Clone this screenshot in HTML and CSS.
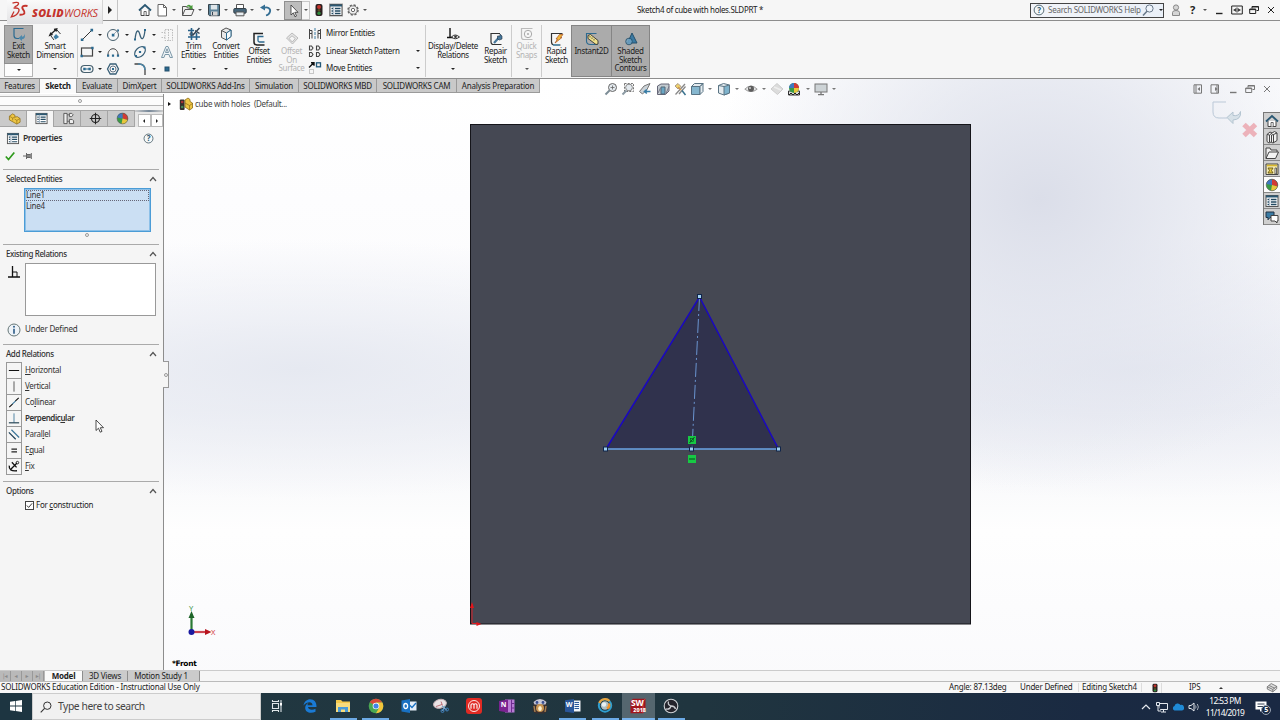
FILE: index.html
```
<!DOCTYPE html>
<html lang="en">
<head>
    <meta charset="UTF-8">
    <meta name="viewport" content="width=device-width, initial-scale=1.0">
    <title>Sketch4 of cube with holes.SLDPRT *</title>
    <link rel="stylesheet" href="styles.css">
</head>
<body>

    <!-- Shared icons -->
    <svg class="defs">
        <symbol id="i-home" viewBox="0 0 14 14"><path d="M3 7v5.500h8V7" fill="#fff" stroke="#444"/><path d="M1 7.500 7 2l6 5.500" fill="none" stroke="#2b5873" stroke-width="1.800"/><path d="M6 12.500V8.500h2.200v4" fill="#fff" stroke="#444" stroke-width=".8"/></symbol>
        <symbol id="i-light" viewBox="0 0 14 14"><rect x="3.500" y="1" width="7" height="12" rx="2" fill="#2a2020"/><circle cx="7" cy="4" r="2" fill="#c3342c"/><circle cx="7" cy="7.300" r="1.300" fill="#5c4a20"/><circle cx="7" cy="10.300" r="1.700" fill="#2f8a3c"/></symbol>
        <symbol id="i-props" viewBox="0 0 14 14"><rect x="1" y="1.500" width="12" height="11" fill="#fff" stroke="#555"/><path d="M1 2.500h12" stroke="#2b5873" stroke-width="2"/><path d="M4.800 3v9" stroke="#9ab" /><path d="M2.500 5.500h1.500M2.500 8h1.500M2.500 10.500h1.500M6 5.500h5.500M6 8h5.500M6 10.500h5.500" stroke="#234a62" stroke-width="1.300"/></symbol>
        <symbol id="i-ball" viewBox="0 0 14 14"><circle cx="7" cy="7" r="5.800" fill="#3a9a45"/><path d="M7 7V1.200A5.800 5.800 0 0 1 12.500 8.500z" fill="#d33a35"/><path d="M7 7 1.300 6A5.800 5.800 0 0 1 7 1.200z" fill="#3f78c0"/><path d="M7 7l5.500 1.500A5.800 5.800 0 0 1 6 12.700z" fill="#e8c63c"/><circle cx="7" cy="7" r="5.800" fill="none" stroke="#555" stroke-width=".6"/></symbol>
        <symbol id="i-part" viewBox="0 0 14 14"><path d="M1.500 4.500 5 2l2.500 1.500v2L10 5l3 2v4l-3.500 2L1.500 8.500z" fill="#eec644" stroke="#8d6c16" stroke-width=".8"/><path d="M1.500 4.500 5 6.500 7.500 5.500M5 6.500V9M9.500 13V9l3.500-2M9.500 9 7 7.500" fill="none" stroke="#8d6c16" stroke-width=".7"/></symbol>
        <symbol id="i-up" viewBox="0 0 8 6"><path d="M1 5 4 1.500 7 5" fill="none" stroke="#555" stroke-width="1.200"/></symbol>
        <symbol id="i-min" viewBox="0 0 10 10"><path d="M2 8.500h6.500" stroke="currentColor" stroke-width="1.400"/></symbol>
        <symbol id="i-restore" viewBox="0 0 10 10"><path d="M3 3.500V1.500h6.500v4H7.500M.7 4h6v4.500h-6zM.7 4.600h6M3 2h6.500" fill="none" stroke="currentColor"/></symbol>
        <symbol id="i-close" viewBox="0 0 10 10"><path d="M2 2l6 6M8 2 2 8" stroke="currentColor"/></symbol>
        <symbol id="i-help" viewBox="0 0 14 14"><circle cx="7" cy="7" r="5.700" fill="#f4f8fa" stroke="#3f5560"/></symbol>
    </svg>

    <!-- Title bar -->
    <header class="titlebar">
        <div class="logo">
            <svg class="ds" viewBox="0 0 18 18"><path d="M2 2.200C5 .9 8.500 1 8 3 7.600 4.500 5.500 5.300 4 5.800M3 7.200C7 6.500 9.500 7.500 8.200 10.500 7 13.500 4 15.300.8 15.800L3.500 10.500" fill="none" stroke="#c4332c" stroke-width="1.300"/><path d="M17 5C13 4 10.500 5.800 12.500 8.300 15 11.300 15 14 9 13.800" fill="none" stroke="#c4332c" stroke-width="1.900"/></svg>
            <span class="brand"><b>SOLID</b>WORKS</span>
        </div>
        <span class="play"></span>
        <nav class="quick">
            <svg class="ic first"><use href="#i-home"/></svg>
            <svg class="ic" viewBox="0 0 14 14"><path d="M3 1.500h5.500L11.500 4.500v8.500H3z" fill="#fff" stroke="#666"/><path d="M8.500 1.500v3h3" fill="none" stroke="#666"/></svg><i class="caret"></i>
            <svg class="ic" viewBox="0 0 14 14"><path d="M1.500 12.500v-9h4l1 1.500H11v2" fill="#eee" stroke="#555"/><path d="M1.500 12.500 4 6.500h9l-2.500 6z" fill="#f4f4f4" stroke="#555"/><path d="M5 4.500C6 1.500 8.500 1 10 3L11.500 2v4H7.800L9 4.500C8 3 6.500 3.500 5 4.500z" fill="#4a9a3c"/></svg><i class="caret"></i>
            <svg class="ic" viewBox="0 0 14 14"><path d="M1.500 1.500h11v11.200h-10l-1-1z" fill="#5b8298" stroke="#34424a"/><rect x="3.800" y="1.800" width="6.400" height="4.700" fill="#dfe6ea"/><rect x="4" y="8.500" width="6.500" height="4" fill="#d5d5d5"/><path d="M5.500 9v3" stroke="#345"/></svg><i class="caret"></i>
            <svg class="ic" viewBox="0 0 14 14"><path d="M3.500 5.500V1.500h7v4" fill="#fff" stroke="#555"/><rect x=".8" y="5.500" width="12.400" height="4.700" rx="1" fill="#47667a" stroke="#34424a"/><path d="M3 9h8v3.800H3z" fill="#e8eef2" stroke="#555"/></svg><i class="caret"></i>
            <svg class="ic" viewBox="0 0 14 14"><path d="M4 5.200C8.500 3 12 5.500 11 8.800 10.500 10.800 9 12 7 12.500" fill="none" stroke="#356f94" stroke-width="1.800"/><path d="M1 4.500 6 1.500v6z" fill="#356f94"/></svg><i class="caret"></i>
            <span class="pick"><svg viewBox="0 0 14 14"><path d="M5 1v10l2.300-2.200L9 12.800l1.500-.8L8.800 8.300H12z" fill="#fff" stroke="#333" stroke-width=".8"/></svg></span>
            <span class="pickdrop"><i class="caret"></i></span>
            <svg class="ic light"><use href="#i-light"/></svg>
            <svg class="ic framed"><use href="#i-props"/></svg>
            <svg class="ic gear" viewBox="0 0 14 14"><circle cx="7" cy="7" r="5" fill="#eee" stroke="#666" stroke-width="1.500" stroke-dasharray="2.200 1.720"/><circle cx="7" cy="7" r="4.100" fill="#f2f2f2" stroke="#666" stroke-width=".8"/><circle cx="7" cy="7" r="1.700" fill="#fff" stroke="#666"/></svg><i class="caret"></i>
        </nav>
        <div class="doc-title">Sketch4 of cube with holes.SLDPRT *</div>
        <div class="search">
            <span class="q"><svg><use href="#i-help"/></svg><b>?</b></span>
            <span class="ph">Search SOLIDWORKS Help</span>
            <svg class="mag" viewBox="0 0 12 12"><circle cx="7.500" cy="4.500" r="3.600" fill="#eef4fb" stroke="#68788a"/><path d="M5 7.200 1 11.500" stroke="#68788a" stroke-width="1.500"/></svg>
            <i class="caret dark"></i>
        </div>
        <div class="winbtns">
            <svg class="person" viewBox="0 0 10 14"><circle cx="5" cy="4.500" r="2.600" fill="#d5d5d5" stroke="#888"/><path d="M1.500 12.500V9.500Q1.500 7.500 5 7.500t3.500 2v3z" fill="#d5d5d5" stroke="#888"/></svg>
            <b class="qm">?</b>
            <i class="caret"></i>
            <svg class="w1"><use href="#i-min"/></svg>
            <svg class="w2" viewBox="0 0 12 10"><path d="M.7 1h10.600v8H.7zM6 2.500v5M2.500 5h2M7.500 5h2" fill="none" stroke="#222"/><path d="M4.800 3 3 5l1.800 2zM7.200 3 9 5 7.200 7z" fill="#222"/></svg>
            <svg class="w3"><use href="#i-restore"/></svg>
            <svg class="w4"><use href="#i-close"/></svg>
        </div>
    </header>

    <!-- Ribbon -->
    <section class="ribbon">
        <div class="btn exit">
            <div class="face">
                <svg class="ic" viewBox="0 0 14 14"><path d="M11.500 1.500H2v7q0 3 3 3h2" fill="none" stroke="#2c6a90" stroke-width="1.200"/><path d="M6.500 11 10 8v1.800q2.500 0 2.500-3.300 1.500 5.500-2.500 5.700V14z" fill="#4d88ab"/></svg>
                <span>Exit<br>Sketch</span>
            </div>
            <i class="caret dark"></i>
        </div>
        <div class="btn smart">
            <svg class="ic" viewBox="0 0 14 14"><path d="M2 8 8 2.500M3 5.500l-1.300 3 3-1M6 2.500l2.800-.7-.8 2.700" fill="none" stroke="#222" stroke-width="1.300"/><path d="M3 9l3 4M9 3l3.500 4" stroke="#333" fill="none"/><path d="M8 7 11 10l-3.500 2.500L5.500 10z" fill="#3f7ea4"/></svg>
            <span>Smart<br>Dimension</span>
            <i class="caret dark"></i>
        </div>
        <div class="tools">
            <svg class="ic" viewBox="0 0 14 14"><path d="M2 12 12 2" stroke="#333"/><path d="M.8 10.500h2.600v2.600H.8zM10.500.8h2.600v2.600h-2.600z" fill="#2c6a90"/></svg><i class="caret dark"></i>
            <svg class="ic" viewBox="0 0 14 14"><circle cx="7" cy="7" r="5.500" fill="none" stroke="#47606e"/><path d="M5.800 5.800h2.600v2.600H5.800zM11 1.500h2v2h-2z" fill="#2c6a90"/><path d="M8 6l4-4" stroke="#789" stroke-width=".7"/></svg><i class="caret dark"></i>
            <svg class="ic" viewBox="0 0 14 14"><path d="M2 12C3 1 5.500 1 7 7s4 5 5-5" fill="none" stroke="#3a6078" stroke-width="1.300"/><path d="M1 10.500h2v2H1zM11 1h2v2h-2z" fill="#2c6a90"/></svg><i class="caret dark"></i>
            <svg class="ic faded" viewBox="0 0 14 14"><path d="M5 1.500h7.500v11H5zM1.500 4.500H5M1.500 9.500H5M8.500 1.500v11" fill="none" stroke="#999" stroke-dasharray="1.500 1"/></svg>

            <svg class="ic" viewBox="0 0 14 14"><rect x="1.500" y="3" width="11" height="8" fill="none" stroke="#444" stroke-width="1.200"/><path d="M.5 9.800h2.400v2.400H.5zM11.200 1.800h2.400v2.400h-2.400z" fill="#2c6a90"/></svg><i class="caret dark"></i>
            <svg class="ic" viewBox="0 0 14 14"><path d="M2 10.500C1.500 1.500 12.500 1.500 12 10.500" fill="none" stroke="#444"/><path d="M1 9.500h2.200v2.200H1zM10.900 9.500h2.200v2.200h-2.200zM5.900 9.500h2.200v2.200H5.900z" fill="#2c6a90"/></svg><i class="caret dark"></i>
            <svg class="ic" viewBox="0 0 14 14"><ellipse cx="7" cy="7" rx="6.300" ry="4.200" transform="rotate(-45 7 7)" fill="none" stroke="#3a6078" stroke-width="1.200"/><path d="M5.900 5.900h2.200v2.200H5.900zM10.500 1.500h2v2h-2zM2 10h2v2H2z" fill="#2c6a90"/></svg><i class="caret dark"></i>
            <svg class="ic" viewBox="0 0 14 14"><path d="M1.500 12.500 6 1.500h2l4.500 11H10l-1-3H5l-1 3zM5.500 7.500h3L7 3.800z" fill="#f0f5f8" stroke="#7c98a8"/></svg>

            <svg class="ic" viewBox="0 0 14 14"><rect x="1" y="3.500" width="12" height="7" rx="3.500" fill="none" stroke="#47606e" stroke-width="1.200"/><path d="M3.200 5.800h2.400v2.400H3.200zM8.400 5.800h2.400v2.400H8.400z" fill="#2c6a90"/><path d="M4 7h6" stroke="#2c6a90"/></svg><i class="caret dark"></i>
            <svg class="ic" viewBox="0 0 14 14"><path d="M1.500 7 4.200 2h5.600l2.700 5-2.700 5H4.200z" fill="none" stroke="#3a6078" stroke-width="1.300"/><circle cx="7" cy="7" r="3" fill="none" stroke="#678"/><path d="M6 6h2v2H6z" fill="#2c6a90"/></svg><i></i>
            <svg class="ic" viewBox="0 0 14 14"><path d="M1.500 2H6q6 0 6 6v5" fill="none" stroke="#444" stroke-width="1.300"/><path d="M5 2q7 0 7 6" fill="none" stroke="#4a86a8" stroke-width="1.500"/></svg><i class="caret dark"></i>
            <svg class="ic" viewBox="0 0 14 14"><rect x="5" y="5" width="4" height="4" fill="#2c6a90" stroke="#24506c"/></svg>
        </div>
        <div class="btn trim">
            <svg class="ic" viewBox="0 0 14 14"><path d="M1 3.500h6M4.500 1v12M1 10h12M9.500 6v7" stroke="#27618a" stroke-width="1.600"/><path d="M12.500 1 5.500 8.500M8 3.500l4.500 3" stroke="#345" stroke-width="1.500"/><circle cx="4.500" cy="7" r="1.500" fill="none" stroke="#345"/></svg>
            <span><u>T</u>rim<br>Entities</span>
            <i class="caret dark"></i>
        </div>
        <div class="btn convert">
            <svg class="ic" viewBox="0 0 14 14"><path d="M2.500 3.500 7 1l5 2v6.500L7.500 13l-5-2.500z" fill="#e9e9e9" stroke="#555"/><path d="M2.500 3.500 7.500 6v7M7.500 6 12 3" fill="none" stroke="#555"/><path d="M7.500 6 12 3v6.500L7.500 13z" fill="#f7f9fa" stroke="#2c6a90"/></svg>
            <span>Convert<br>Entities</span>
            <i class="caret dark"></i>
        </div>
        <div class="btn low offset">
            <svg class="ic" viewBox="0 0 14 14"><path d="M11 1.500H2V10q0 3 3 3h7.500" fill="none" stroke="#222" stroke-width="1.500"/><path d="M11.500 4.500H6v4q0 1.500 1.500 1.500h5" fill="none" stroke="#2c6a90" stroke-width="1.300"/></svg>
            <span>Offset<br>Entities</span>
        </div>
        <div class="btn low surface off">
            <svg class="ic" viewBox="0 0 14 14"><path d="M1.500 6 7 1l6 5-5.500 6z" fill="#e4e4e4" stroke="#bbb"/><path d="M4 6.500 7 3.800l3.300 2.700L7.300 10z" fill="#f5f5f5" stroke="#bbb"/></svg>
            <span>Offset<br>On<br>Surface</span>
        </div>
        <ul class="stack">
            <li><svg class="ic" viewBox="0 0 14 14"><path d="M1.500 2v10M1.500 3.500h2.500v3H1.500M4 6.500v5M12.500 2v10M12.500 3.500H10v3h2.500M10 6.500v5" fill="none" stroke="#444"/><path d="M7 1v12" stroke="#3d7da3" stroke-dasharray="3 1"/></svg><span>Mirror Entities</span></li>
            <li><svg class="ic" viewBox="0 0 14 14"><path d="M1.500 2h2l1.500 2-1.500 2h-2zM8.500 2h2L12 4l-1.500 2h-2zM1.500 8.500h2l1.500 2-1.500 2h-2zM8.500 8.500h2l1.500 2-1.500 2h-2z" fill="none" stroke="#444" stroke-width="1.100"/></svg><span>Linear Sketch Pattern</span><i class="caret dark"></i></li>
            <li><svg class="ic" viewBox="0 0 14 14"><path d="M1 6.500 5.500 2M3 1.800h3v3" fill="none" stroke="#111" stroke-width="1.400"/><rect x="8.500" y="1.800" width="4" height="4" fill="#eee" stroke="#245a7a" stroke-width="1.300"/><path d="M1.500 8.500h4v4h-4z" fill="none" stroke="#999" stroke-dasharray="1 1"/></svg><span>Move Entities</span><i class="caret dark"></i></li>
        </ul>
        <div class="btn display">
            <svg class="ic" viewBox="0 0 14 14"><path d="M4 1v9M1 10.500h6" stroke="#111" stroke-width="1.400"/><path d="M5.500 10q3.500-4 8 0-4.500 3.500-8 0z" fill="#eee" stroke="#333"/><circle cx="9.500" cy="9.800" r="1.300" fill="#333"/></svg>
            <span>Display/Delete<br>Relations</span>
            <i class="caret dark"></i>
        </div>
        <div class="btn low repair">
            <svg class="ic" viewBox="0 0 14 14"><path d="M11 1.500H2V10q0 2.500 2.500 2.500h8" fill="none" stroke="#333" stroke-width="1.200"/><path d="M5 11 9.500 6" stroke="#47779a" stroke-width="2.200"/><path d="M8.500 4l2.500 0 0-2 2 2v3L10.500 8 8.500 7z" fill="#47779a" stroke="#234" stroke-width=".6"/></svg>
            <span>Repair<br>Sketch</span>
        </div>
        <div class="btn snaps off">
            <svg class="ic" viewBox="0 0 14 14"><path d="M12.500 1.500h-11V10q0 2.500 2.500 2.500h8.500" fill="none" stroke="#bbb" stroke-width="1.200"/><circle cx="8" cy="7" r="3.700" fill="none" stroke="#aaa"/><circle cx="8" cy="7" r="1" fill="#aaa"/></svg>
            <span>Quick<br>Snaps</span>
            <i class="caret"></i>
        </div>
        <div class="btn low rapid">
            <svg class="ic" viewBox="0 0 14 14"><path d="M12.500 1.500h-11V10q0 3 3 3h6" fill="none" stroke="#333" stroke-width="1.200"/><path d="M3 13h7" stroke="#4b8cb0" stroke-width="1.500"/><path d="M9.500 2.500h3.500L10.500 5.500H12L5 11l2.500-4H6z" fill="#f0b63a" stroke="#a8501c" stroke-width=".7"/></svg>
            <span>Rapid<br>Sketch</span>
        </div>
        <div class="btn low on instant">
            <svg class="ic" viewBox="0 0 14 14"><path d="M11.500 1.500h-10V9q0 3.500 4 3.500h7" fill="none" stroke="#2c6a90" stroke-width="1.100"/><path d="M3 3.500l2.500-1 7.500 6v3.500l-2 .5L3 6.500z" fill="#efe08a" stroke="#333" stroke-width=".9"/><path d="M5 5.500V4M7 7V5.500M9 8.500V7" stroke="#333" stroke-width=".7"/></svg>
            <span>Instant2D</span>
        </div>
        <div class="btn low on shaded">
            <svg class="ic" viewBox="0 0 14 14"><path d="M8 1 13 11H3.500z" fill="#3b7aa3" stroke="#24506c"/><circle cx="5" cy="9.500" r="3.300" fill="#6fa3c4" stroke="#24506c" opacity=".85"/></svg>
            <span>Shaded<br>Sketch<br>Contours</span>
        </div>
    </section>

    <main class="workspace">
        <div class="tabrow">
            <div class="tabs">
                <span class="t1">Features</span><span class="t2 active">Sketch</span><span class="t3">Evaluate</span><span class="t4">DimXpert</span><span class="t5">SOLIDWORKS Add-Ins</span><span class="t6">Simulation</span><span class="t7">SOLIDWORKS MBD</span><span class="t8">SOLIDWORKS CAM</span><span class="t9">Analysis Preparation</span>
            </div>
            <!-- Heads-up view toolbar -->
            <div class="headsup">
                <svg viewBox="0 0 14 14"><circle cx="8.500" cy="5.500" r="4" fill="#e3e9ee" stroke="#666"/><path d="M8.500 3.500v4M6.500 5.500h4" stroke="#666" stroke-width=".8"/><path d="M5.500 8.500 1.500 12.500" stroke="#7c8c96" stroke-width="2"/></svg>
                <svg viewBox="0 0 14 14"><path d="M3.500 1.500h9v8h-9z" fill="none" stroke="#777" stroke-dasharray="2 1.200"/><circle cx="8" cy="5.500" r="3.400" fill="#e3e9ee" stroke="#888"/><path d="M5.500 8.500 1.500 12.500" stroke="#8b9aa3" stroke-width="2"/></svg>
                <svg viewBox="0 0 14 14"><path d="M12 1.500 6 4 1.500 9.500l3 2.500L9 7.500z" fill="#ccd3d8" stroke="#777"/><path d="M12.500 9.500H7M8.800 7.500 6.500 9.500l2.300 2" fill="none" stroke="#397da6" stroke-width="1.600"/></svg>
                <svg viewBox="0 0 14 14"><path d="M1.500 4 5 2h8v7l-3.500 3.500h-8z" fill="#c3cbd0" stroke="#667"/><path d="M5 5h4v7H5z" fill="#69a6c4" stroke="#567"/><path d="M2 11 4.500 6M10 11.500l3-7" stroke="#778"/></svg>
                <svg viewBox="0 0 14 14"><path d="M2 4l3-2.500 3 3L5 7z" fill="#efd36c" stroke="#a98"/><path d="M12 2 2.500 12.500M12.500 4.500 6 12" stroke="#888" stroke-width="1.300"/><path d="M9 8.500 12.500 13" stroke="#39728f" stroke-width="1.500"/><path d="M5 5l3 3" stroke="#d39b4b" stroke-width="1.500"/></svg>
                <svg viewBox="0 0 14 14"><path d="M1.500 4.500h8.500v8H1.500z" fill="#86b7cf" stroke="#5a7484"/><path d="M1.500 4.500 4.500 1.500h8.500l-3 3zM10 12.500l3-3v-8l-3 3z" fill="#e4ebef" stroke="#5a7484"/></svg><i class="caret"></i>
                <svg viewBox="0 0 14 14"><path d="M1.500 3.500 6.500 1.500l6 1.500v8L7 13l-5.500-2z" fill="#e4ebef" stroke="#5a7484"/><path d="M7 4.500v8.500l5.500-2V3z" fill="#7fb3cc" stroke="#5a7484"/><path d="M1.500 3.500 7 4.500" stroke="#5a7484"/></svg><i class="caret"></i>
                <svg viewBox="0 0 14 14"><path d="M.8 7.200Q7 .8 13.200 7.200 7 12 .8 7.200z" fill="#e6e6e6" stroke="#999"/><circle cx="7" cy="6.800" r="3" fill="#5c5c5c"/><circle cx="6" cy="6" r="1" fill="#ccc"/></svg><i class="caret"></i>
                <svg viewBox="0 0 14 14"><path d="M1 7 7 1.500 13 7 7.500 12.500z" fill="#dcdcdc" stroke="#ccc"/><path d="M4 5l7 3" stroke="#eee" stroke-width="1.500"/></svg>
                <svg viewBox="0 0 14 14"><path d="M1.500 9h11v4h-11z" fill="#ddd" stroke="#333"/><path d="M2 13l2-2 2 2 2-2 2 2 2-2" stroke="#222" fill="none"/><circle cx="7" cy="6" r="5" fill="#3a9a45"/><path d="M7 6V1a5 5 0 0 1 5 5z" fill="#d33a35"/><path d="M7 6H2a5 5 0 0 1 5-5z" fill="#3f78c0"/><path d="M7 6h5a5 5 0 0 1-5 5z" fill="#e8c63c"/></svg><i class="caret"></i>
                <svg viewBox="0 0 14 14"><rect x="1" y="2" width="12" height="8" fill="#cdd3d6" stroke="#777"/><path d="M7 10v2.500M4 12.700h6" stroke="#777" stroke-width="1.300"/></svg><i class="caret"></i>
            </div>
            <div class="docbtns">
                <svg viewBox="0 0 10 10"><path d="M1 .8h7.500v8.400H1zM3 .8v8.400" fill="none" stroke="currentColor"/><path d="M7 3v4L4.500 5z" fill="currentColor"/></svg>
                <svg viewBox="0 0 10 10"><path d="M1 .8h7.500v8.400H1zM7 .8v8.400" fill="none" stroke="currentColor"/><path d="M5 3v4l2.500-2z" fill="currentColor"/></svg>
                <svg><use href="#i-min"/></svg>
                <svg><use href="#i-restore"/></svg>
                <svg><use href="#i-close"/></svg>
            </div>
        </div>

        <div class="body">
            <!-- Property manager -->
            <aside class="panel">
                <div class="grip"><i class="dot"></i></div>
                <div class="mgr-tabs">
                    <span><svg><use href="#i-part"/></svg></span>
                    <span class="active"><svg><use href="#i-props"/></svg></span>
                    <span><svg viewBox="0 0 14 14"><path d="M5.500 3H8M3.500 6v6M5.500 10H8" stroke="#666"/><path d="M2 1.500h3.500v11H2zM8 1.500h2.500l1.500 1.500-1.500 2H8zM8 8h3l1.500 1.500v3H8z" fill="#eee" stroke="#555"/></svg></span>
                    <span><svg viewBox="0 0 14 14"><circle cx="7" cy="7" r="4.300" fill="none" stroke="#222" stroke-width="1.200"/><path d="M7 .8v12.400M.8 7h12.400" stroke="#222" stroke-width="1.200"/></svg></span>
                    <span><svg><use href="#i-ball"/></svg></span>
                    <div class="more"><b class="prev"></b><b class="next"></b></div>
                </div>
                <div class="prop-head">
                    <svg><use href="#i-props"/></svg>
                    <h1>Properties</h1>
                    <span class="q"><svg><use href="#i-help"/></svg><b>?</b></span>
                </div>
                <div class="prop-actions">
                    <svg viewBox="0 0 10 10"><path d="M.8 5.500 3.500 8.500 9.300 1.500" fill="none" stroke="#2f9a1c" stroke-width="1.700"/></svg>
                    <svg viewBox="0 0 10 10"><path d="M0 5h4M3.500 2v6M4 3.500h3.500v3H4M8.300 2v6" fill="none" stroke="#666"/><path d="M4 4h4v2H4z" fill="#888"/></svg>
                </div>
                <section class="group selected">
                    <h2>Selected Entities<svg><use href="#i-up"/></svg></h2>
                    <div class="listbox"><span class="focus">Line1</span><span>Line4</span></div>
                    <i class="dot"></i>
                </section>
                <section class="group existing">
                    <h2>Existing Relations<svg><use href="#i-up"/></svg></h2>
                    <div class="relations">
                        <svg viewBox="0 0 12 12"><path d="M4.500 0v11M0 11h12" stroke="#111" stroke-width="1.300"/><path d="M4.500 6H9v5" fill="none" stroke="#111"/></svg>
                        <div class="empty"></div>
                    </div>
                    <div class="state"><svg viewBox="0 0 14 14"><circle cx="7" cy="7" r="6" fill="#eef3f8" stroke="#677"/><circle cx="7" cy="3.800" r="1" fill="#34628c"/><path d="M7 5.800v5" stroke="#34628c" stroke-width="1.700"/></svg>Under Defined</div>
                </section>
                <section class="group add">
                    <h2>Add Relations<svg><use href="#i-up"/></svg></h2>
                    <ul>
                        <li><svg viewBox="0 0 14 14"><path d="M1 7h12" stroke="#111" stroke-width="1.200"/></svg><span><u>H</u>orizontal</span></li>
                        <li><svg viewBox="0 0 14 14"><path d="M7 1v12" stroke="#444"/></svg><span><u>V</u>ertical</span></li>
                        <li><svg viewBox="0 0 14 14"><path d="M1.500 12.500 5.500 8.500M8.500 5.500l4-4" stroke="#111" stroke-width="1.300"/><path d="M5 9l4-4" stroke="#3a7599" stroke-width="1.200"/></svg><span>Co<u>l</u>linear</span></li>
                        <li><svg viewBox="0 0 14 14"><path d="M7 1v11" stroke="#3a7599"/><path d="M1 12h12" stroke="#33505f" stroke-width="1.500"/></svg><span class="bold">Perpendic<u>u</u>lar</span></li>
                        <li><svg viewBox="0 0 14 14"><path d="M1 4.500 9 12.500" stroke="#1d4057" stroke-width="1.400"/><path d="M4 1.500l9 9" stroke="#3a7599" stroke-width="1.400"/></svg><span>Paral<u>l</u>el</span></li>
                        <li><svg viewBox="0 0 14 14"><path d="M4 5.500h6.500M4 8.500h6.500" stroke="#222" stroke-width="1.400"/></svg><span>E<u>q</u>ual</span></li>
                        <li><svg viewBox="0 0 14 14"><path d="M4.500 2 10 8M10.500 3 3 10.500" stroke="#111" stroke-width="1.500"/><path d="M1.500 6q-1 7 9 6" fill="none" stroke="#111" stroke-width="1.600"/><circle cx="11" cy="2.500" r="1.500" fill="none" stroke="#111"/></svg><span><u>F</u>ix</span></li>
                    </ul>
                </section>
                <section class="group options">
                    <h2>Options<svg><use href="#i-up"/></svg></h2>
                    <label><span class="check"><svg viewBox="0 0 8 8"><path d="M1 4l2 2.200L7 1.500" fill="none" stroke="#333" stroke-width="1.100"/></svg></span>For <u>c</u>onstruction</label>
                </section>
            </aside>

            <!-- Graphics area -->
            <div class="canvas">
                <div class="tree"><i class="expand"></i><svg viewBox="0 0 14 14"><rect x=".8" y="2.500" width="4.800" height="10.500" rx="1" fill="#33302c"/><circle cx="3.200" cy="5" r="1.300" fill="#a33"/><circle cx="3.200" cy="10" r="1.300" fill="#485"/><path d="M6 3l3-2 2 1.500v2l2.500 1.500v5L10.500 13 6 10z" fill="#eec644" stroke="#8d6c16" stroke-width=".8"/><path d="M10.500 13V8.500l3-2M10.500 8.500 6 6" fill="none" stroke="#8d6c16" stroke-width=".7"/></svg><span class="name">cube with holes</span><span class="cfg">(Default...</span></div>
                <svg class="model" viewBox="164 94 1099 576">
                    <rect x="470.500" y="124.500" width="500" height="499.500" fill="#454853" stroke="#15151a"/>
                    <path d="M472 604v19.500h6" fill="none" stroke="#d81f26"/>
                    <path d="M472 602l2 6h-4zM481.500 624l-5 2v-4z" fill="#e3151b"/>
                    <path d="M699.500 297 606 449h172.500z" fill="#30324d"/>
                    <path d="M606 449 699.500 297 778.500 449" fill="none" stroke="#1a08c0" stroke-width="1.500"/>
                    <path d="M699.500 297 692 449" stroke="#6a94d0" stroke-dasharray="14 3 2 3"/>
                    <path d="M606 449h172.500" stroke="#6aa5e6" stroke-width="1.700"/>
                    <g fill="#9fd0f0" stroke="#10254a">
                        <rect x="697.500" y="294.500" width="4" height="4"/><rect x="603.500" y="447" width="4" height="4"/><rect x="689.500" y="447" width="4" height="4"/><rect x="776.500" y="447" width="4" height="4"/>
                    </g>
                    <path d="M688 436h8v8h-8zM688 455h8v8h-8z" fill="#17c944"/>
                    <path d="M689 459h6M689.500 443l5-6" stroke="#074d1b"/><rect x="690.500" y="438.500" width="3" height="3" fill="none" stroke="#074d1b" stroke-width=".6"/>
                    <!-- origin triad -->
                    <path d="M191.500 632V617" stroke="#2a7a35" stroke-width="2.200"/><path d="M191.500 611l3 7h-6z" fill="#1d6428"/>
                    <path d="M191.500 632h15" stroke="#cc4450" stroke-width="2.200"/><path d="M211.500 632l-6.500 3v-6z" fill="#b7141e"/>
                    <circle cx="191.500" cy="632" r="3" fill="#1a1aa0"/>
                    <text class="ax y" x="189" y="610.500">Y</text><text class="ax x" x="211" y="635">X</text>
                    <!-- confirmation corner -->
                    <g opacity=".75"><path d="M1226 102h-13v10q0 6 6 6h8" fill="none" stroke="#a9bbcd"/><path d="M1227 117.500l6-5.500v3.500q6 1 7.500-4 1 8-7.500 8.500v3.500z" fill="#cfdce4" stroke="#9fb5c4"/>
                    <path d="M1244 124.500l11.500 11M1255.500 124.500 1244 135.500" stroke="#eb9da6" stroke-width="5"/></g>
                </svg>
                <span class="handle"><i class="dot"></i></span>
                <span class="view-name">*Front</span>
            </div>

            <div class="taskpane">
                <span><svg><use href="#i-home"/></svg></span>
                <span><svg viewBox="0 0 14 14"><path d="M2 4.500 5 2l2 1 2.500-1.500L12 3v7.500L8 13l-2-1-2 1-2-1.500z" fill="#f2f2f2" stroke="#444"/><path d="M4.500 5v7M6.500 5v7M8.500 4.500V13M2 4.500l2.500.5L7 3M6.500 5l2 -.5L12 3" fill="none" stroke="#444"/></svg></span>
                <span><svg viewBox="0 0 14 14"><path d="M1 12.500V2h4l1 2h6v2" fill="#eee" stroke="#444"/><path d="M1 12.500 4 6h9.500l-3 6.500z" fill="#f4f4f4" stroke="#444"/></svg></span>
                <span><svg viewBox="0 0 14 14"><path d="M1 2h12v10.500H1z" fill="#f3e9b0" stroke="#444"/><path d="M2 3.500h10" stroke="#d9b92e" stroke-width="1.500"/><path d="M3 6h5L6.500 8.500 8 11H3l1.500-2.500z" fill="#e5c93c" stroke="#5b4c12" stroke-width=".8"/><path d="M10 6h1.500v6H10z" fill="#fff" stroke="#444" stroke-width=".8"/></svg></span>
                <span class="active"><svg><use href="#i-ball"/></svg></span>
                <span><svg><use href="#i-props"/></svg></span>
                <span><svg viewBox="0 0 14 14"><path d="M1 2h8v5.500H5l-2 2.300V7.500H1z" fill="#3a7ba3" stroke="#234"/><path d="M6 5.500h7V11h-1v2l-2-2H6z" fill="#fff" stroke="#444"/></svg></span>
            </div>
        </div>

        <!-- Model / motion tabs -->
        <div class="sheets">
            <div class="nav"><i>|◂</i><i>◂</i><i>▸</i><i>▸|</i></div>
            <span class="s1 active">Model</span><span class="s2">3D Views</span><span class="s3">Motion Study 1</span>
        </div>
    </main>

    <footer class="status">
        <span class="edition">SOLIDWORKS Education Edition - Instructional Use Only</span>
        <span class="angle">Angle: 87.13deg</span>
        <span class="defined">Under Defined</span>
        <span class="editing">Editing Sketch4</span>
        <span class="sig"><svg><use href="#i-light"/></svg></span>
        <span class="units">IPS</span>
        <i class="upcaret"></i>
        <svg class="tag" viewBox="0 0 14 14"><path d="M1 6 6 2l7 3.500v3L8 12.500 1 9z" fill="#ddd" stroke="#666"/><path d="M1 6l7 3.500L13 5.500M8 9.500v3M3.500 4.500l7 3.500" fill="none" stroke="#666"/></svg>
    </footer>

    <!-- Windows taskbar -->
    <div class="taskbar">
        <div class="start"><svg viewBox="0 0 12 12"><path d="M0 1.800 5 1v4.600H0zM5.700.9 12 0v5.600H5.700zM0 6.400h5V11l-5-.8zM5.700 6.400H12V12l-6.300-.9z" fill="#fff"/></svg></div>
        <div class="find"><svg viewBox="0 0 12 12"><circle cx="7.300" cy="4.700" r="3.700" fill="none" stroke="#333"/><path d="M4.600 7.400.7 11.300" stroke="#333" stroke-width="1.100"/></svg>Type here to search</div>
        <div class="apps">
            <span><svg viewBox="0 0 16 16"><path d="M3.500 5.500h6v5h-6zM3.500 2v1.500h6V2M3.500 14v-1.500h6V14M12 2v12" fill="none" stroke="#dde4e7" stroke-width="1.100"/><path d="M11 5h2v2.500h-2z" fill="#fff"/></svg></span>
            <span><svg viewBox="0 0 16 16"><path d="M1.500 7.500C2 3.500 5 1.200 8.200 1.200c4 0 6.500 3 6.300 7.800H6c.3 3 4.500 3.500 7.500 1.800v3C8.500 16 3.200 14.500 3.200 10c0-2.500 1.300-4 3.300-5-.8.900-1 1.500-1 2.200h5C10.500 3 5 3.300 1.500 7.500z" fill="#1a7ad4"/></svg></span>
            <span class="run"><svg viewBox="0 0 16 16"><path d="M1 2h5l1.500 1.500H15V14H1z" fill="#f4c84b"/><path d="M1 5h14v9H1z" fill="#f8dc7c"/><path d="M3 14V9h10v5h-3v-2.500H6V14z" fill="#4a9bd8"/></svg></span>
            <span class="run"><svg viewBox="0 0 16 16"><circle cx="8" cy="8" r="7.300" fill="#4aa852"/><path d="M8 8 1.700 4.300A7.300 7.300 0 0 1 14.300 4.500H8z" fill="#d94a3a"/><path d="M8 4.500h6.400A7.300 7.300 0 0 1 8 15.300l3-5.300z" fill="#f2c53b"/><circle cx="8" cy="8" r="3.300" fill="#fff"/><circle cx="8" cy="8" r="2.600" fill="#4384e6"/></svg></span>
            <span><svg viewBox="0 0 16 16"><path d="M7 3.500h8.500v9H7z" fill="#e4eef8"/><path d="M8.500 7l2.500 2.500L15 5" stroke="#1971c2" stroke-width="1.300" fill="none"/><path d="M.5 2.500 9 1v14l-8.500-1.500z" fill="#1971c2"/><ellipse cx="4.700" cy="8" rx="1.900" ry="2.500" fill="none" stroke="#fff" stroke-width="1.300"/></svg></span>
            <span><svg viewBox="0 0 16 16"><ellipse cx="7" cy="5.800" rx="6.500" ry="4.300" transform="rotate(-12 7 6)" fill="#eae4e6" stroke="#c5b0b5"/><path d="M3 8.500 9 6.500M8 3.500l1.500 4" stroke="#b0505a" stroke-width=".8"/><path d="M9 8l4.500 4M12 8l-2.500 5" stroke="#7da6c8" stroke-width="1.200"/><circle cx="9.500" cy="13" r="1.500" fill="none" stroke="#3f80bd"/><circle cx="14" cy="11.500" r="1.500" fill="none" stroke="#3f80bd"/></svg></span>
            <span><svg viewBox="0 0 16 16"><rect width="16" height="16" rx="3" fill="#e02a23"/><circle cx="8" cy="8" r="5.500" fill="none" stroke="#fff" stroke-width=".9"/><path d="M5 10.800V7q0-1.200 1.500-1.200T8 7v3.800M8 7q0-1.200 1.500-1.200T11 7v3.800" fill="none" stroke="#fff" stroke-width="1.100"/></svg></span>
            <span><svg viewBox="0 0 16 16"><path d="M6 1.500h9.500v13H6z" fill="#b77bd4"/><path d="M12.500 1.500v13M12.500 5.500h3M12.500 10h3" stroke="#6f2c91"/><path d="M0 3l9-1.500v13L0 13z" fill="#7a2391"/></svg><b>N</b></span>
            <span><svg viewBox="0 0 16 16"><path d="M2 3 8 .5l6 2.500 1.500 10-3.500 2.500H4L.5 13z" fill="#3a3030"/><path d="M1.500 4q6.500-6 13 0l-1 2.500H2.500z" fill="#c7c9d8"/><circle cx="5" cy="4.500" r="1.400" fill="#3a4e90"/><circle cx="11" cy="4.500" r="1.400" fill="#3a4e90"/><circle cx="8" cy="10" r="4" fill="#c89450"/><ellipse cx="8" cy="10.500" rx="1.800" ry="2.500" fill="#fff2cf"/><path d="M2 8l1 6M14 8l-1 6" stroke="#a88050" stroke-width="1.400"/></svg></span>
            <span class="run"><svg viewBox="0 0 16 16"><path d="M7 2.500h8.500v11H7z" fill="#f2f5fa"/><path d="M9.500 4.500H14M9.500 6.500H14M9.500 8.500H14M9.500 10.500H14" stroke="#2b579a"/><path d="M0 2.300 9 1v14L0 13.700z" fill="#2a5699"/></svg><b>W</b></span>
            <span class="run"><svg viewBox="0 0 16 16"><circle cx="8" cy="7.500" r="6.200" fill="none" stroke="#2f9fd0" stroke-width="2"/><path d="M2.300 5A6.200 6.200 0 0 1 12.500 3" fill="none" stroke="#e9a23b" stroke-width="2.200"/><circle cx="8" cy="7.500" r="4.200" fill="#aebfc4"/><path d="M10 10.500a4.200 4.200 0 0 0 2-5" stroke="#f0922a" stroke-width="2.400" fill="none"/><circle cx="7" cy="6.500" r="2.200" fill="#e9f0f2"/></svg></span>
            <span class="run cur"><svg viewBox="0 0 16 16"><path d="M.5 3 3 .8h12.500V13L13 15.200H.5z" fill="#a3161c"/><path d="M.5 3H13v12.200M13 3l2.500-2.200" fill="none" stroke="#d6585c" stroke-width=".7"/></svg><b class="sw">SW</b><em>2018</em></span>
            <span class="run"><svg viewBox="0 0 16 16"><circle cx="8" cy="8" r="6.800" fill="#24232b" stroke="#d0d2d6" stroke-width="1.100"/><path d="M8 8q-3.500-1-2.500-4.500M8 8q3.800-.2 4.500 3M8 8q-1 3.800-5 3" fill="none" stroke="#c8cacf" stroke-width="1.300"/></svg></span>
        </div>
        <div class="tray">
            <svg viewBox="0 0 12 12"><path d="M2 8l4-4 4 4" fill="none" stroke="#e4e8ee" stroke-width="1.200"/></svg>
            <svg viewBox="0 0 12 12"><path d="M3 2.500h8.500v6H3zM5 11h5M7.500 8.500V11" fill="none" stroke="#e4e8ee"/><path d="M.5 1.500h3v3h-3zM2 4.500V10h3" fill="#1b2b41" stroke="#e4e8ee"/></svg>
            <svg viewBox="0 0 12 12"><path d="M2.500 9.500a2.300 2.300 0 0 1 0-4.400A3.300 3.300 0 0 1 8.500 4 2.600 2.600 0 0 1 10 9.500z" fill="#1f8ad6"/></svg>
            <svg viewBox="0 0 12 12"><path d="M1 4.500h2L6 2v8L3 7.500H1z" fill="none" stroke="#e4e8ee"/><path d="M7.500 4.500q1.200 1.500 0 3M9.300 3q2.200 3 0 6" fill="none" stroke="#c4cad3" stroke-width=".8"/></svg>
            <div class="clock">12:53 PM<br>11/14/2019</div>
            <div class="notes"><svg viewBox="0 0 12 12"><path d="M.5.5h11v8H7L5 11V8.500H.5z" fill="#fff"/><path d="M2.500 3h7M2.500 5.500h7" stroke="#1b2b41" stroke-width=".9"/></svg><b>5</b></div>
        </div>
    </div>

    <svg class="pointer" viewBox="0 0 10 14"><path d="M1 1v10.500l2.500-2.300 1.700 4 1.800-.8-1.700-3.700h3.200z" fill="#fff" stroke="#222" stroke-width=".8"/></svg>

</body>
</html>
```
FILE: styles.css
```
* {
    box-sizing: border-box;
}
body {
    margin: 0;
    width: 1280px;
    height: 720px;
    overflow: hidden;
    display: flex;
    flex-direction: column;
    font-family: "Noto Sans", "Open Sans", sans-serif;
    font-size: 8px;
    line-height: 8.7px;
    letter-spacing: -.32px;
    color: #222;
    background: #f5f5f5;
}
svg {
    display: block;
    flex: none;
}
ul, h1, h2 {
    margin: 0;
    padding: 0;
    list-style: none;
    font-size: inherit;
}
i, em {
    font-style: normal;
}
u {
    text-underline-offset: 1px;
    text-decoration-thickness: .7px;
}
.defs {
    position: absolute;
    width: 0;
    height: 0;
}
.ic {
    width: 14px;
    height: 14px;
}
.caret {
    width: 0;
    height: 0;
    flex: none;
    border: 2px solid transparent;
    border-top-color: #555;
    border-bottom: 0;
}
.caret.dark {
    border-top-color: #222;
}
.dot {
    width: 4px;
    height: 4px;
    border: 1px solid #999;
    border-radius: 50%;
}

/* Title bar */
.titlebar {
    height: 21px;
    flex: none;
    display: flex;
    align-items: center;
    border-bottom: 1px solid #8d8d8d;
    background: #f6f6f6;
}
.logo {
    position: relative;
    width: 96px;
    height: 24px;
    margin: 0 0 -4px 7px;
    padding-left: 3px;
    display: flex;
    align-items: center;
    background: linear-gradient(#fafafa, #e2e2e4);
    border-right: 1px solid #d5d5d5;
    color: #c4332c;
}
.ds {
    width: 19px;
    height: 18px;
    margin-top: -5px;
}
.brand {
    margin: 1px 0 0 3px;
    font-family: "Open Sans", sans-serif;
    font-size: 10.8px;
    line-height: 14px;
    letter-spacing: -.15px;
    font-style: italic;
}
.brand b {
    font-weight: 800;
    letter-spacing: .25px;
}
.play {
    width: 15px;
    height: 20px;
    display: flex;
    align-items: center;
    border-right: 1px solid #c4c4c4;
}
.play::before {
    content: "";
    margin-left: 5px;
    border: 4px solid transparent;
    border-left: 4px solid #222;
    border-right: 0;
}
.quick {
    width: 252px;
    display: flex;
    align-items: center;
}
.quick .ic {
    margin: 0 3px 0 0;
}
.quick .first {
    margin: 0 3px 0 20px;
}
.quick .caret {
    margin-right: 5px;
}
.pick {
    width: 18px;
    height: 19px;
    padding: 2px 1px;
    margin-left: -1px;
    background: #bdbdbd;
    border: 1px solid #8f8f8f;
}
.pick svg {
    width: 14px;
    height: 14px;
}
.pickdrop {
    width: 8px;
    height: 19px;
    display: flex;
    align-items: center;
    padding-left: 2px;
    border: 1px solid #c8c8c8;
    border-left: 0;
}
.quick .light {
    margin-left: 2px;
}
.quick .framed {
    background: #ccc;
}
.doc-title {
    width: 660px;
    padding-left: 267px;
    white-space: nowrap;
}
.search {
    width: 134px;
    height: 15px;
    display: flex;
    align-items: center;
    border: 1px solid #444;
    background: linear-gradient(90deg, #f2f4f8, #eaf0f8);
    color: #666;
    white-space: nowrap;
}
.q {
    display: grid;
    place-items: center;
}
.q svg, .q b {
    grid-area: 1 / 1;
}
.q svg {
    width: 12px;
    height: 12px;
}
.q b {
    font-size: 8px;
    color: #2b5873;
}
.search .q {
    margin: 0 3px 0 2px;
}
.search .ph {
    width: 94px;
    letter-spacing: -.25px;
}
.mag {
    width: 12px;
    height: 12px;
    margin-right: 5px;
}
.winbtns {
    display: flex;
    align-items: center;
    color: #222;
}
.winbtns svg {
    width: 10px;
    height: 10px;
}
.winbtns .person {
    height: 14px;
    margin: 0 9px 0 7px;
}
.qm {
    width: 6px;
    margin-right: 7px;
    font-size: 11px;
}
.winbtns .w1 {
    margin: 0 7px 0 7px;
}
.winbtns .w2 {
    width: 12px;
    margin-right: 6px;
}
.winbtns .w3 {
    margin-right: 7px;
}

/* Ribbon */
.ribbon {
    height: 58px;
    flex: none;
    display: flex;
    padding: 4px 0 0 4px;
    border-bottom: 1px solid #8d8d8d;
    background: #f6f6f6;
}
.btn {
    position: relative;
    height: 52px;
    padding-top: 2px;
    display: flex;
    flex-direction: column;
    align-items: center;
    text-align: center;
    white-space: nowrap;
}
.btn > span, .face > span {
    margin-top: 1px;
}
.btn > .caret {
    margin-top: 9px;
}
.btn.low {
    padding-top: 7px;
}
.off {
    color: #b4b4b4;
}
.on {
    background: #ababab;
    border: 1px solid #858585;
}
.btn.on {
    padding-top: 6px;
}
.exit {
    width: 29px;
    padding: 0;
    background: #fdfdfd;
    border: 1px solid #b5b5b5;
}
.exit .face {
    width: 29px;
    height: 39px;
    margin: -1px;
    padding-top: 1px;
    display: flex;
    flex-direction: column;
    align-items: center;
    background: #ababab;
    border: 1px solid #8f8f8f;
}
.exit > .caret {
    margin-top: 6px;
}
.smart {
    width: 44px;
}
.tools {
    width: 101px;
    height: 52px;
    padding: 1px 0 0 2px;
    display: grid;
    grid-template-columns: 14px 12px 15px 12px 15px 12px 14px;
    grid-template-rows: 17.3px 17.3px 17.3px;
    align-items: center;
    border-left: 1px solid #ccc;
    border-right: 1px solid #ccc;
}
.tools .caret {
    margin-left: 4px;
}
.faded {
    opacity: .6;
}
.trim { width: 31px; }
.convert { width: 34px; }
.offset { width: 32px; }
.surface { width: 33px; }
.stack {
    width: 117px;
    padding-top: 0;
}
.stack li {
    height: 17.3px;
    display: flex;
    align-items: center;
}
.stack span {
    width: 90px;
    margin-left: 4px;
}
.display {
    width: 55px;
    border-left: 1px solid #ccc;
}
.repair {
    width: 31px;
}
.snaps {
    width: 31px;
    border-left: 1px solid #ccc;
    border-right: 1px solid #ccc;
}
.rapid { width: 29px; }
.instant { width: 41px; }
.shaded {
    width: 39px;
    margin-left: -1px;
}

/* Workspace */
.workspace {
    height: 603px;
    flex: none;
    display: flex;
    flex-direction: column;
    background:
        radial-gradient(ellipse 330px 290px at 1040px 120px, #dbdee9 0%, rgba(224, 227, 237, .75) 40%, rgba(240, 241, 247, 0) 100%),
        radial-gradient(ellipse 500px 130px at 1130px 290px, rgba(226, 229, 239, .8), rgba(240, 241, 247, 0)),
        radial-gradient(ellipse 520px 130px at 300px 290px, #e6e9f1, rgba(240, 241, 247, 0)),
        linear-gradient(#fff, #fbfbfd 40%, #f3f4f8 55%, #fefefe 75%, #fafafc);
}
.tabrow {
    height: 15px;
    flex: none;
    display: flex;
}
.tabs {
    width: 540px;
    display: flex;
    line-height: 13px;
    text-align: center;
    letter-spacing: -.22px;
    white-space: nowrap;
}
.tabs span {
    height: 14px;
    background: #c9c9c9;
    border: 1px solid #9a9a9a;
    border-width: 0 1px 1px 0;
}
.tabs .active, .sheets .active {
    background: #fafafa;
    font-weight: 700;
    border-bottom: 0;
}
.t1 { width: 40px; }
.t2 { width: 37px; }
.t3 { width: 41px; }
.t4 { width: 44px; }
.t5 { width: 88px; }
.t6 { width: 49px; }
.t7 { width: 78px; }
.t8 { width: 80px; }
.t9 { width: 83px; }
.headsup {
    width: 650px;
    padding: 4px 0 0 64px;
    display: flex;
    align-items: center;
}
.headsup svg {
    width: 14px;
    height: 14px;
    margin-right: 3.2px;
}
.headsup .caret {
    margin: 0 4.600px 0 1px;
    border-top-color: #777;
}
.docbtns {
    padding: 4px 0 0 3px;
    display: flex;
    gap: 7.3px;
    align-items: center;
    color: #777;
}
.docbtns svg {
    width: 10px;
    height: 10px;
}
.body {
    height: 576px;
    display: flex;
}

/* Property manager */
.panel {
    width: 164px;
    background: #f5f5f5;
    border-right: 1px solid #8d8d8d;
    color: #333;
}
.grip {
    height: 10px;
    margin: 2px 0 4px;
    padding-right: 3px;
    display: flex;
    align-items: center;
    justify-content: center;
    background: #fcfcfc;
    border: solid #b5b5b5;
    border-width: 1px 0;
}
.mgr-tabs {
    height: 17px;
    display: flex;
}
.mgr-tabs span {
    width: 27px;
    padding: 1px 0 0 8px;
    background: #cacaca;
    border: 1px solid #a5a5a5;
    border-left: 0;
}
.mgr-tabs .active {
    background: #f5f5f5;
    border-bottom: 0;
}
.mgr-tabs svg {
    width: 13px;
    height: 13px;
}
.more {
    width: 28px;
    padding: 4px 0 0 3px;
    display: flex;
    background: linear-gradient(90deg, #ccc, #789 50%, #ccc) top / 100% 2px no-repeat #e5e5e5;
}
.more b {
    flex: 1;
    display: grid;
    place-items: center;
    background: #fff;
    border: 1px solid #bbb;
}
.more b::before {
    content: "";
    border: 2px solid transparent;
}
.more .prev::before {
    border-right-color: #222;
    border-left: 0;
}
.more .next::before {
    border-left-color: #222;
    border-right: 0;
}
.prop-head {
    height: 22px;
    padding: 0 9px 0 6px;
    display: flex;
    align-items: center;
}
.prop-head > svg {
    width: 14px;
    height: 13px;
}
.prop-head h1 {
    flex: 1;
    margin-left: 3px;
    font-size: 8.6px;
    font-weight: 600;
    letter-spacing: -.45px;
}
.prop-head .q svg {
    width: 11px;
    height: 11px;
}
.prop-actions {
    height: 20px;
    padding: 2px 0 0 5px;
    display: flex;
    gap: 8px;
}
.prop-actions svg {
    width: 10px;
    height: 10px;
}
.group {
    margin: 0 4px 0 3px;
    border-top: 1px solid #aaa;
}
.group h2 {
    height: 18px;
    padding: 0 2px 0 3px;
    display: flex;
    align-items: center;
    justify-content: space-between;
    font-weight: 500;
    letter-spacing: -.38px;
}
.group h2 svg {
    width: 8px;
    height: 6px;
}
.selected {
    height: 75px;
}
.listbox {
    width: 127px;
    height: 44px;
    margin-left: 21px;
    padding: 1px;
    background: #cbdff3;
    border: 1px solid #4b9cd6;
    outline: 1px solid #8cc0e8;
    outline-offset: -2px;
}
.listbox span {
    display: block;
    height: 11px;
    line-height: 9px;
}
.listbox .focus {
    border: 1px dotted #667;
    border-left: 0;
    line-height: 8px;
}
.selected > .dot {
    display: block;
    margin: 1px 0 0 82px;
}
.existing {
    height: 100px;
}
.relations {
    display: flex;
    padding-left: 5px;
}
.relations svg {
    width: 12px;
    height: 12px;
    margin-top: 3px;
}
.empty {
    width: 131px;
    height: 53px;
    margin-left: 5px;
    background: #fff;
    border: 1px solid #999;
}
.state {
    height: 27px;
    padding-left: 4px;
    display: flex;
    align-items: center;
    gap: 4px;
    letter-spacing: -.2px;
}
.state svg {
    width: 14px;
    height: 14px;
}
.add {
    height: 137px;
}
.add li {
    height: 16px;
    display: flex;
    align-items: center;
    gap: 3px;
    padding-left: 3px;
}
.add li span {
    margin-top: -1px;
}
.add li svg {
    width: 16px;
    height: 17px;
    margin-top: -1px;
    padding: 1px;
    border: 1px solid #999;
}
.bold {
    font-weight: 600;
    letter-spacing: -.42px;
}
.options label {
    height: 10px;
    display: flex;
    align-items: center;
    padding-left: 22px;
    white-space: pre;
    color: #222;
    letter-spacing: -.27px;
}
.check {
    width: 9px;
    height: 9px;
    margin-right: 2px;
    background: #fff;
    border: 1px solid #444;
}
.check svg {
    width: 7px;
    height: 7px;
}

/* Graphics area */
.canvas {
    position: relative;
    width: 1099px;
}
.tree {
    height: 20px;
    padding-left: 4px;
    display: flex;
    align-items: center;
    color: #444;
}
.tree .expand {
    border: 2.500px solid transparent;
    border-left: 3px solid #111;
    border-right: 0;
}
.tree svg {
    width: 14px;
    height: 14px;
    margin: 0 2px 0 8px;
}
.tree .name {
    width: 59px;
    letter-spacing: -.25px;
}
.model {
    position: absolute;
    left: 0;
    top: 0;
    width: 1099px;
    height: 576px;
}
.ax {
    font-size: 7.5px;
}
.ax.y { fill: #3a9348; }
.ax.x { fill: #d33b45; }
.handle {
    position: absolute;
    left: -1px;
    top: 267px;
    width: 6px;
    height: 27px;
    display: grid;
    place-items: center;
    background: #f5f5f5;
    border: 1px solid #999;
    border-left: 0;
}
.view-name {
    position: absolute;
    left: 8px;
    bottom: 1px;
    font-family: "DejaVu Sans", sans-serif;
    font-weight: 700;
    font-size: 7.5px;
    color: #000;
}
.taskpane {
    width: 17px;
    height: 113px;
    margin-top: 18px;
    border: 1px solid #777;
    border-right: 0;
}
.taskpane span {
    display: block;
    height: 16px;
    padding: 1px 0 0 1px;
    background: #cfcfcf;
    border-bottom: 1px solid #888;
}
.taskpane .active {
    background: #fdfdfd;
}
.taskpane svg {
    width: 14px;
    height: 14px;
}

/* Bottom tabs */
.sheets {
    height: 12px;
    display: flex;
    line-height: 9px;
    text-align: center;
    letter-spacing: -.22px;
    background: #f6f6f6;
    border-top: 1.500px solid #cbcbcb;
    border-bottom: 1px solid #bbb;
}
.sheets > span {
    background: #cbcbcb;
    border-right: 1px solid #8d8d8d;
}
.nav {
    width: 45px;
    display: flex;
    background: #b9b9b9;
    color: #8a8a8a;
    font-size: 6px;
    font-family: "DejaVu Sans", sans-serif;
}
.nav i {
    width: 11px;
    border-right: 1px solid #999;
}
.s1 { width: 38px; }
.s2 { width: 45px; }
.s3 {
    width: 72px;
    padding-right: 5px;
}

.status {
    height: 11px;
    flex: none;
    display: flex;
    align-items: center;
    background: #f7f7f7;
    letter-spacing: -.2px;
    white-space: nowrap;
}
.edition { width: 949px; padding-left: 1px; }
.angle { width: 71px; }
.defined { width: 59px; border-right: 1px solid #ddd; }
.editing { width: 63px; padding-left: 3px; border-right: 1px solid #ddd; }
.sig { width: 20px; padding-left: 8px; border-right: 1px solid #ddd; }
.sig svg { width: 10px; height: 10px; }
.units { width: 57px; padding-left: 27px; }
.upcaret {
    border: 2px solid transparent;
    border-bottom-color: #333;
    border-top: 0;
}
.tag {
    width: 12px;
    height: 11px;
    margin-left: 43px;
}

/* Taskbar */
.taskbar {
    height: 27px;
    flex: none;
    display: flex;
    background: linear-gradient(90deg, #213841, #20353f 55%, #1a2a42 85%, #1a2943);
    color: #fff;
}
.start {
    width: 32px;
    padding: 7px 0 0 10px;
    background: #1d3541;
}
.start svg {
    width: 12px;
    height: 12px;
}
.find {
    width: 229px;
    padding-left: 7px;
    display: flex;
    align-items: center;
    gap: 6px;
    background: #f1f1f1;
    border: 1px solid #ccc;
    color: #444;
    font-size: 10.3px;
    letter-spacing: -.42px;
}
.find svg {
    width: 12px;
    height: 12px;
}
.apps {
    width: 879px;
    display: flex;
}
.apps span {
    position: relative;
    width: 32.800px;
    display: grid;
    place-items: center;
    border: solid transparent;
    border-width: 0 3px 2px;
}
.apps span > * {
    grid-area: 1 / 1;
}
.apps svg {
    width: 16px;
    height: 16px;
}
.apps .run {
    background: linear-gradient(#6caae6, #6caae6) 3px 100% / 27px 2px no-repeat border-box;
}
.apps .cur {
    background: linear-gradient(#79b4ee, #79b4ee) bottom / 100% 2px no-repeat border-box, #55666f;
}
.apps b {
    font-size: 7px;
    margin-right: 7px;
}
.apps .sw {
    margin: 0 2px 4px 0;
    font-size: 8.5px;
}
.apps em {
    margin: 9px 0 0 3px;
    font-size: 5.5px;
    font-weight: 800;
    letter-spacing: 0;
}
.tray {
    display: flex;
    align-items: center;
}
.tray > svg {
    width: 12px;
    height: 12px;
    margin-right: 4px;
}
.clock {
    width: 44px;
    margin-left: -1px;
    text-align: center;
    font-size: 8.4px;
    line-height: 12px;
    letter-spacing: -.6px;
}
.notes {
    position: relative;
    margin-left: 8px;
}
.notes svg {
    width: 12px;
    height: 12px;
}
.notes b {
    position: absolute;
    left: 6px;
    top: 4px;
    width: 10px;
    height: 10px;
    border: 1px solid #9aa5b5;
    border-radius: 50%;
    background: #1a2a42;
    font-size: 7px;
    line-height: 8px;
    text-align: center;
}

/* Mouse pointer */
.pointer {
    position: absolute;
    left: 95px;
    top: 419px;
    width: 10px;
    height: 14px;
}
```
